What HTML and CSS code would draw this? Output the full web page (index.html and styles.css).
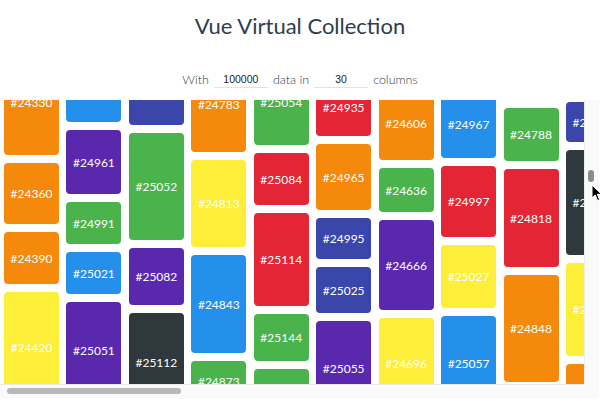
FILE: index.html
```html
<!DOCTYPE html>
<html>
<head>
<meta charset="utf-8">
<link rel="stylesheet" href="styles.css">
</head>
<body>
<div class="app">
  <h1 class="title">Vue Virtual Collection</h1>
  <div class="controls">
    <span>With</span>
    <input class="num" type="text" value="100000">
    <span>data in</span>
    <input class="num" type="text" value="30">
    <span>columns</span>
  </div>
  <div class="collection">
    <div class="viewport">
      <div class="columns">
        <div class="col" style="margin-top:-50px">
          <div class="cell orange" style="height:105px">#24330</div>
          <div class="cell orange" style="height:61px">#24360</div>
          <div class="cell orange" style="height:52px">#24390</div>
          <div class="cell yellow" style="height:110px">#24420</div>
        </div>
        <div class="col" style="margin-top:-60px">
          <div class="cell blue" style="height:82px">#24931</div>
          <div class="cell purple" style="height:64px">#24961</div>
          <div class="cell green" style="height:42px">#24991</div>
          <div class="cell blue" style="height:42px">#25021</div>
          <div class="cell purple" style="height:97px">#25051</div>
        </div>
        <div class="col" style="margin-top:-40px">
          <div class="cell indigo" style="height:65px">#25022</div>
          <div class="cell green" style="height:107px">#25052</div>
          <div class="cell purple" style="height:57px">#25082</div>
          <div class="cell dark" style="height:98px">#25112</div>
        </div>
        <div class="col" style="margin-top:-44px">
          <div class="cell orange" style="height:96px">#24783</div>
          <div class="cell yellow" style="height:87px">#24813</div>
          <div class="cell blue" style="height:98px">#24843</div>
          <div class="cell green" style="height:40px">#24873</div>
        </div>
        <div class="col" style="margin-top:-40px">
          <div class="cell green" style="height:85px">#25054</div>
          <div class="cell red" style="height:52px">#25084</div>
          <div class="cell red" style="height:93px">#25114</div>
          <div class="cell green" style="height:47px">#25144</div>
          <div class="cell green" style="height:50px">#25174</div>
        </div>
        <div class="col" style="margin-top:-22px">
          <div class="cell red" style="height:58px">#24935</div>
          <div class="cell orange" style="height:66px">#24965</div>
          <div class="cell indigo" style="height:41px">#24995</div>
          <div class="cell indigo" style="height:46px">#25025</div>
          <div class="cell purple" style="height:94px">#25055</div>
        </div>
        <div class="col" style="margin-top:-14px">
          <div class="cell orange" style="height:74px">#24606</div>
          <div class="cell green" style="height:44px">#24636</div>
          <div class="cell purple" style="height:90px">#24666</div>
          <div class="cell yellow" style="height:90px">#24696</div>
        </div>
        <div class="col" style="margin-top:-10px">
          <div class="cell blue" style="height:68px">#24967</div>
          <div class="cell red" style="height:71px">#24997</div>
          <div class="cell yellow" style="height:63px">#25027</div>
          <div class="cell blue" style="height:94px">#25057</div>
        </div>
        <div class="col" style="margin-top:8px">
          <div class="cell green" style="height:53px">#24788</div>
          <div class="cell red" style="height:98px">#24818</div>
          <div class="cell orange" style="height:107px">#24848</div>
          <div class="cell blue" style="height:60px">#24878</div>
        </div>
        <div class="col" style="margin-top:2px">
          <div class="cell indigo" style="height:40px">#24790</div>
          <div class="cell dark" style="height:105px">#24820</div>
          <div class="cell yellow" style="height:93px">#24850</div>
          <div class="cell orange" style="height:60px">#24880</div>
        </div>
      </div>
    </div>
    <div class="vbar"><div class="vthumb"></div></div>
    <div class="hbar"><div class="hthumb"></div></div>
    <div class="corner"></div>
  </div>
</div>
<svg class="cursor" width="12" height="18" viewBox="0 0 12 18">
  <path d="M1 1 L1 14 L4.2 11 L6.6 16.6 L8.6 15.7 L6.3 10.3 L10.6 10.3 Z" fill="#000" stroke="#fff" stroke-width="1" stroke-linejoin="round"/>
</svg>
</body>
</html>
```

FILE: styles.css
```css
html, body {
  margin: 0;
  padding: 0;
  background: #fff;
}

.app {
  font-family: "Lato", "Liberation Sans", sans-serif;
  color: #2c3e50;
  text-align: center;
}

.title {
  margin: 0;
  padding-top: 11px;
  font-size: 22px;
  line-height: 30px;
  font-weight: 400;
}

.controls {
  margin-top: 28px;
  height: 20px;
  display: flex;
  justify-content: center;
  align-items: center;
  gap: 5px;
  font-size: 12.5px;
  font-weight: 300;
  color: #2c3e50;
}

.num {
  width: 54px;
  height: 16px;
  padding: 0;
  border: none;
  border-bottom: 1px solid #e2e2e2;
  font-family: "Liberation Sans", sans-serif;
  font-size: 10.5px;
  color: #222;
  text-align: center;
  outline: none;
  background: transparent;
}

.collection {
  margin-top: 11px;
  display: grid;
  grid-template-columns: 584px 15px;
  grid-template-rows: 284px 15px;
  width: 599px;
}

.viewport {
  overflow: hidden;
  padding-left: 4px;
}

.columns {
  display: flex;
  align-items: flex-start;
  gap: 7.44px;
}

.col {
  flex: 0 0 55px;
  display: flex;
  flex-direction: column;
  gap: 8px;
}

.cell {
  box-sizing: border-box;
  border-radius: 4px;
  display: flex;
  align-items: center;
  justify-content: center;
  color: #fff;
  font-size: 12px;
  font-weight: 400;
  white-space: nowrap;
  overflow: visible;
}

.orange { background: #f5890c; }
.blue { background: #2590ec; }
.purple { background: #5a28ad; }
.indigo { background: #3a46a9; }
.green { background: #4bb34c; }
.red { background: #e42535; }
.yellow { background: #fdee3a; }
.dark { background: #2f383c; }

.vbar {
  background: #fafafa;
  border-left: 1px solid #ececec;
  box-sizing: border-box;
  padding-top: 70px;
  padding-left: 3px;
}

.vthumb {
  width: 6px;
  height: 12px;
  border-radius: 3px;
  background: #8c8c8c;
}

.hbar {
  background: #fafafa;
  border-top: 1px solid #ececec;
  box-sizing: border-box;
  padding-top: 3px;
  padding-left: 7px;
}

.hthumb {
  width: 174px;
  height: 6px;
  border-radius: 3px;
  background: #b8b8b8;
}

.corner {
  background: #fafafa;
}

.cursor {
  position: absolute;
  left: 591px;
  top: 184px;
}
```
